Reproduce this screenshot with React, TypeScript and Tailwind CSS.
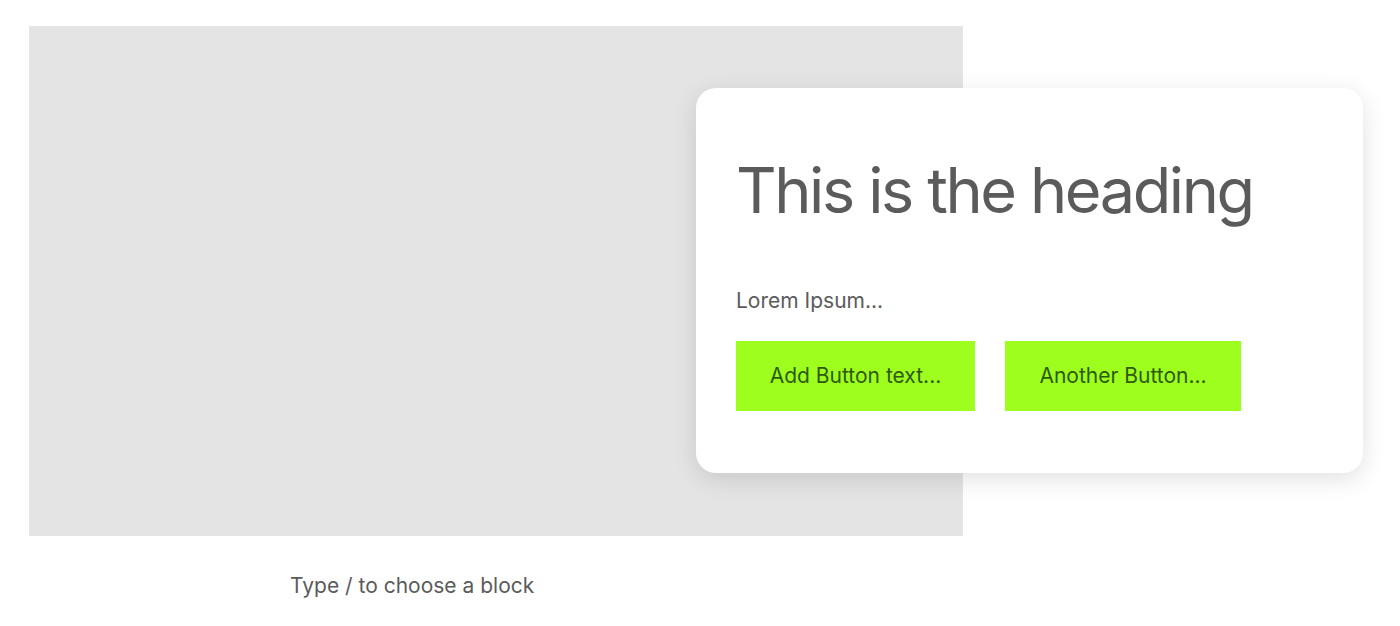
import React from "react";

const font = { fontFamily: "Inter, 'Noto Sans', sans-serif" };

export default function App() {
  return (
    <div className="min-h-screen bg-white pt-[26px] pl-[29px]" style={font}>
      <div className="relative w-[1335px]">
        <div className="h-[510px] w-[934px] bg-[#e4e4e4]" />
        <div className="absolute left-[667px] top-[62px] w-[667px] rounded-[20px] bg-white px-10 pb-[62px] pt-[66px] shadow-[0_6px_24px_rgba(0,0,0,0.12)]">
          <h1 className="text-[63px] leading-[72px] tracking-[-2.4px] text-[#5b5b5b]">This is the heading</h1>
          <p className="mt-[61px] text-[21px] leading-[28px] text-[#5b5b5b]">Lorem Ipsum...</p>
          <div className="mt-[26px] flex gap-[30px]">
            <button className="h-[70px] w-[239px] bg-[#9eff1f] text-[21px] text-[#2d5a0c]">Add Button text...</button>
            <button className="h-[70px] w-[236px] bg-[#9eff1f] text-[21px] text-[#2d5a0c]">Another Button...</button>
          </div>
        </div>
      </div>
      <p className="ml-[261px] mt-[36px] text-[21px] leading-[28px] text-[#5b5b5b]">Type / to choose a block</p>
    </div>
  );
}
